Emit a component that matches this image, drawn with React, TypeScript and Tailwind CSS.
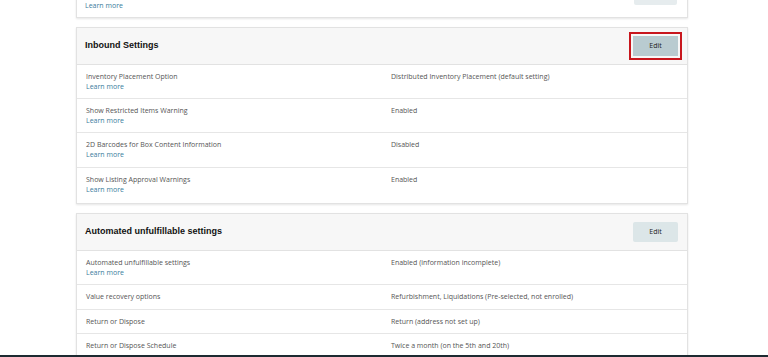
import React from 'react';

type Row = { label: string; value: string; learn?: boolean; h: string };

const inbound: Row[] = [
  { label: 'Inventory Placement Option', value: 'Distributed Inventory Placement (default setting)', learn: true, h: 'h-[34px]' },
  { label: 'Show Restricted Items Warning', value: 'Enabled', learn: true, h: 'h-[34px]' },
  { label: '2D Barcodes for Box Content Information', value: 'Disabled', learn: true, h: 'h-[35px]' },
  { label: 'Show Listing Approval Warnings', value: 'Enabled', learn: true, h: 'h-[35px]' },
];

const unfulfillable: Row[] = [
  { label: 'Automated unfulfillable settings', value: 'Enabled (information incomplete)', learn: true, h: 'h-[34px]' },
  { label: 'Value recovery options', value: 'Refurbishment, Liquidations (Pre-selected, not enrolled)', h: 'h-[25px]' },
  { label: 'Return or Dispose', value: 'Return (address not set up)', h: 'h-[24px]' },
  { label: 'Return or Dispose Schedule', value: 'Twice a month (on the 5th and 20th)', h: 'h-[25px]' },
];

const SettingRow: React.FC<{ row: Row; last?: boolean }> = ({ row, last }) => (
  <div
    className={`grid grid-cols-[305px_1fr] px-[9px] pt-[7px] ${row.h} ${
      last ? '' : 'border-b border-[#e6e6e6]'
    }`}
  >
    <div className="flex flex-col">
      <span className="text-[7px] leading-[10px] text-[#555]">{row.label}</span>
      {row.learn && <span className="text-[7px] leading-[10px] text-[#3a7c9c]">Learn more</span>}
    </div>
    <span className="text-[7px] leading-[10px] text-[#555]">{row.value}</span>
  </div>
);

const Card: React.FC<{ title: string; rows: Row[]; highlight?: boolean }> = ({ title, rows, highlight }) => (
  <div className="border border-[#e2e2e2] bg-white shadow-[0_1px_2px_rgba(0,0,0,0.1)]">
    <div className="flex h-[37px] items-center justify-between border-b border-[#e2e2e2] bg-[#f7f7f7] pl-[8px] pr-[9px]">
      <h2 className="font-['Liberation_Sans',sans-serif] text-[9px] font-bold text-[#111]">{title}</h2>
      <button
        className={`flex h-[20px] w-[45px] items-center justify-center text-[7px] font-medium text-[#222] ${
          highlight
            ? 'bg-[#b9cbd0] outline-2 outline-offset-2 outline-[#c8161d]'
            : 'rounded-[2px] bg-[#dce6e8]'
        }`}
      >
        Edit
      </button>
    </div>
    {rows.map((r, i) => (
      <SettingRow key={r.label} row={r} last={i === rows.length - 1} />
    ))}
  </div>
);

export default function App() {
  return (
    <div className="flex h-[357px] w-[768px] flex-col overflow-hidden bg-white font-['Open_Sans',sans-serif]">
      <div className="flex-1 overflow-hidden">
        <div className="ml-[76px] flex w-[612px] flex-col gap-[9px]">
          {/* previous card, mostly scrolled away */}
          <div className="-mt-[20px] border border-t-0 border-[#e2e2e2] bg-white shadow-[0_1px_2px_rgba(0,0,0,0.1)]">
            <div className="flex h-[37px] items-start justify-between pl-[8px] pr-[10px]">
              <div className="flex flex-col pt-[21px]">
                <span className="text-[7px] leading-[10px] text-[#3a7c9c]">Learn more</span>
              </div>
              <div className="mt-[5px] h-[20px] w-[43px] rounded-[2px] bg-[#e6ecee]" />
            </div>
          </div>
          <Card title="Inbound Settings" rows={inbound} highlight />
          <Card title="Automated unfulfillable settings" rows={unfulfillable} />
        </div>
      </div>
      <div className="h-[2px] w-full bg-[#1d2a31]" />
    </div>
  );
}
